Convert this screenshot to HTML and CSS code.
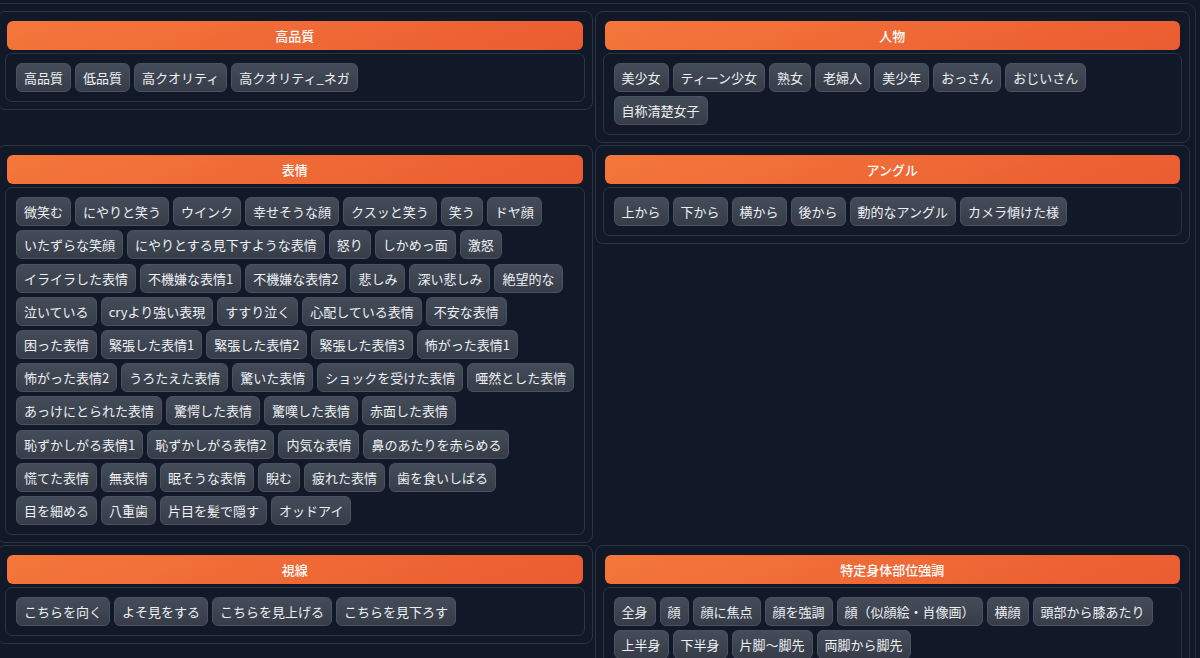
FILE: index.html
```html
<!DOCTYPE html>
<html lang="ja">
<head>
    <meta charset="UTF-8">
    <meta name="viewport" content="width=device-width, initial-scale=1.0">
    <title>プロンプトタグ</title>
    <link rel="stylesheet" href="styles.css">
</head>
<body>
    <div class="panel">
        <div class="grid">
            <section class="card">
                <h3 class="card-title">高品質</h3>
                <div class="tags">
                    <button class="tag">高品質</button>
                    <button class="tag">低品質</button>
                    <button class="tag">高クオリティ</button>
                    <button class="tag">高クオリティ_ネガ</button>
                </div>
            </section>

            <section class="card">
                <h3 class="card-title">人物</h3>
                <div class="tags">
                    <button class="tag">美少女</button>
                    <button class="tag">ティーン少女</button>
                    <button class="tag">熟女</button>
                    <button class="tag">老婦人</button>
                    <button class="tag">美少年</button>
                    <button class="tag">おっさん</button>
                    <button class="tag">おじいさん</button>
                    <button class="tag">自称清楚女子</button>
                </div>
            </section>

            <section class="card">
                <h3 class="card-title">表情</h3>
                <div class="tags">
                    <button class="tag">微笑む</button>
                    <button class="tag">にやりと笑う</button>
                    <button class="tag">ウインク</button>
                    <button class="tag">幸せそうな顔</button>
                    <button class="tag">クスッと笑う</button>
                    <button class="tag">笑う</button>
                    <button class="tag">ドヤ顔</button>
                    <button class="tag">いたずらな笑顔</button>
                    <button class="tag">にやりとする見下すような表情</button>
                    <button class="tag">怒り</button>
                    <button class="tag">しかめっ面</button>
                    <button class="tag">激怒</button>
                    <button class="tag">イライラした表情</button>
                    <button class="tag">不機嫌な表情1</button>
                    <button class="tag">不機嫌な表情2</button>
                    <button class="tag">悲しみ</button>
                    <button class="tag">深い悲しみ</button>
                    <button class="tag">絶望的な</button>
                    <button class="tag">泣いている</button>
                    <button class="tag">cryより強い表現</button>
                    <button class="tag">すすり泣く</button>
                    <button class="tag">心配している表情</button>
                    <button class="tag">不安な表情</button>
                    <button class="tag">困った表情</button>
                    <button class="tag">緊張した表情1</button>
                    <button class="tag">緊張した表情2</button>
                    <button class="tag">緊張した表情3</button>
                    <button class="tag">怖がった表情1</button>
                    <button class="tag">怖がった表情2</button>
                    <button class="tag">うろたえた表情</button>
                    <button class="tag">驚いた表情</button>
                    <button class="tag">ショックを受けた表情</button>
                    <button class="tag">唖然とした表情</button>
                    <button class="tag">あっけにとられた表情</button>
                    <button class="tag">驚愕した表情</button>
                    <button class="tag">驚嘆した表情</button>
                    <button class="tag">赤面した表情</button>
                    <button class="tag">恥ずかしがる表情1</button>
                    <button class="tag">恥ずかしがる表情2</button>
                    <button class="tag">内気な表情</button>
                    <button class="tag">鼻のあたりを赤らめる</button>
                    <button class="tag">慌てた表情</button>
                    <button class="tag">無表情</button>
                    <button class="tag">眠そうな表情</button>
                    <button class="tag">睨む</button>
                    <button class="tag">疲れた表情</button>
                    <button class="tag">歯を食いしばる</button>
                    <button class="tag">目を細める</button>
                    <button class="tag">八重歯</button>
                    <button class="tag">片目を髪で隠す</button>
                    <button class="tag">オッドアイ</button>
                </div>
            </section>

            <section class="card">
                <h3 class="card-title">アングル</h3>
                <div class="tags">
                    <button class="tag">上から</button>
                    <button class="tag">下から</button>
                    <button class="tag">横から</button>
                    <button class="tag">後から</button>
                    <button class="tag">動的なアングル</button>
                    <button class="tag">カメラ傾けた様</button>
                </div>
            </section>

            <section class="card">
                <h3 class="card-title">視線</h3>
                <div class="tags">
                    <button class="tag">こちらを向く</button>
                    <button class="tag">よそ見をする</button>
                    <button class="tag">こちらを見上げる</button>
                    <button class="tag">こちらを見下ろす</button>
                </div>
            </section>

            <section class="card">
                <h3 class="card-title">特定身体部位強調</h3>
                <div class="tags">
                    <button class="tag">全身</button>
                    <button class="tag">顔</button>
                    <button class="tag">顔に焦点</button>
                    <button class="tag">顔を強調</button>
                    <button class="tag">顔（似顔絵・肖像画）</button>
                    <button class="tag">横顔</button>
                    <button class="tag">頭部から膝あたり</button>
                    <button class="tag">上半身</button>
                    <button class="tag">下半身</button>
                    <button class="tag">片脚〜脚先</button>
                    <button class="tag">両脚から脚先</button>
                </div>
            </section>
        </div>
    </div>
</body>
</html>
```

FILE: styles.css
```css
body {
    margin: 0;
    background-color: #111827;
    font-family: "Noto Sans CJK JP", "Noto Sans", sans-serif;
    overflow: hidden;
}
.panel {
    margin: 3px 4px 0 -9px;
    padding: 7px 5px;
    border: 1px solid #283040;
    border-radius: 10px;
}
.grid {
    display: grid;
    grid-template-columns: 1fr 1fr;
    gap: 2px;
    align-items: start;
}
.card {
    padding: 9px 9px 7px;
    border: 1px solid #2b3442;
    border-radius: 8px;
    background-color: #111827;
}
.card-title {
    height: 29px;
    margin: 0 0 3px;
    line-height: 29px;
    text-align: center;
    font-size: 13px;
    font-weight: 500;
    color: #fff;
    border-radius: 6px;
    background: linear-gradient(160deg, #f4773b, #ea5c31);
}
.tags {
    display: flex;
    flex-wrap: wrap;
    gap: 4.2px 4px;
    margin: 0 -2px;
    padding: 9px 8px 9px 10px;
    border: 1px solid #2b3442;
    border-radius: 7px;
}
.tag {
    height: 29px;
    padding: 0 7px;
    font-family: inherit;
    font-size: 13px;
    font-weight: 400;
    color: #eef0f3;
    border: 1px solid #4a5261;
    border-radius: 6px;
    background: linear-gradient(180deg, #444c59, #363d49);
    cursor: pointer;
}
.tag:hover {
    opacity: 0.9;
}
```
